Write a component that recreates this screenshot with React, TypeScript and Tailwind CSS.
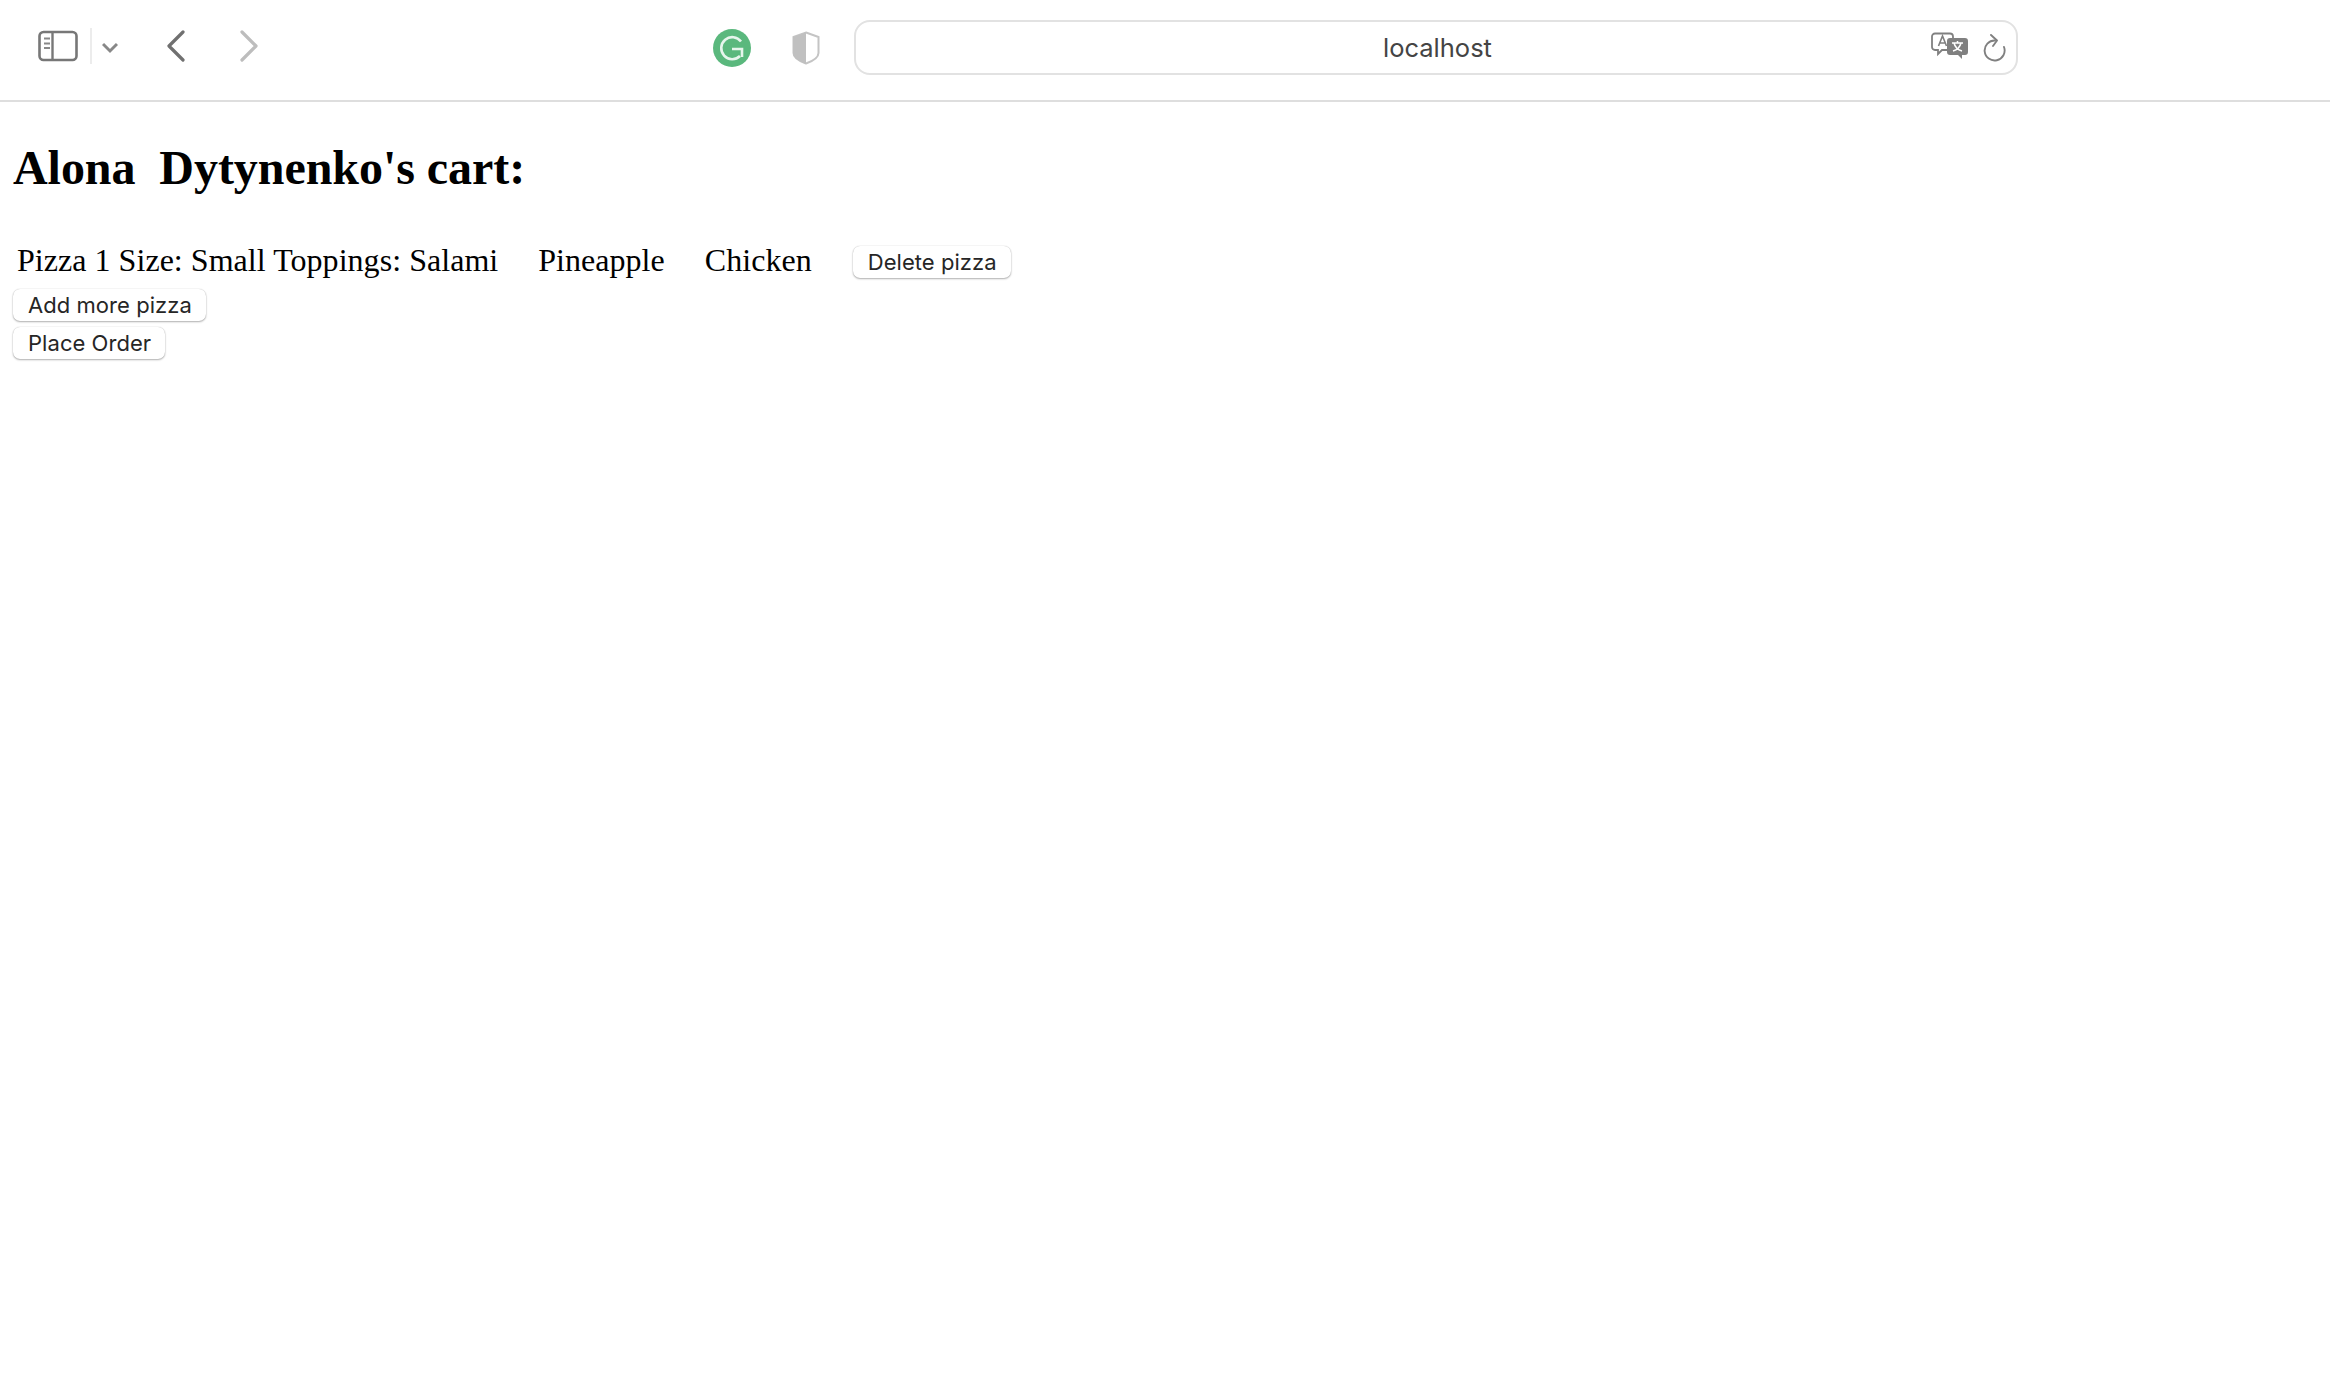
import React from 'react';

const Toolbar = () => (
  <div className="flex h-[102px] items-center border-b-2 border-[#dedede] bg-white pb-[5px] pl-[38px]">
    {/* sidebar toggle */}
    <svg width="40" height="32" viewBox="0 0 40 32" fill="none" className="mb-[3px]">
      <rect x="1.5" y="2" width="37" height="28" rx="4" stroke="#777" strokeWidth="2.6" />
      <path d="M14.5 2v28" stroke="#777" strokeWidth="2.4" />
      <path d="M6 8.5h6M6 13.5h6M6 18h6" stroke="#888" strokeWidth="2" />
    </svg>
    <div className="mb-[3px] ml-[12px] h-[36px] w-[2px] bg-[#ececec]" />
    <svg width="16" height="12" viewBox="0 0 16 12" fill="none" className="ml-[10px]">
      <path d="M1 2l7 7 7-7" stroke="#888" strokeWidth="3" />
    </svg>
    <svg width="20" height="32" viewBox="0 0 20 32" fill="none" className="mb-[3px] ml-[48px]">
      <path d="M17 2L3 16l14 14" stroke="#707070" strokeWidth="3.2" strokeLinecap="round" strokeLinejoin="round" />
    </svg>
    <svg width="20" height="32" viewBox="0 0 20 32" fill="none" className="mb-[3px] ml-[53px]">
      <path d="M3 2l14 14L3 30" stroke="#bdbdbd" strokeWidth="3.2" strokeLinecap="round" strokeLinejoin="round" />
    </svg>

    {/* grammarly */}
    <svg width="38" height="38" viewBox="0 0 38 38" fill="none" className="ml-[454px]">
      <circle cx="19" cy="19" r="19" fill="#5ab87d" />
      <path d="M28 12.5A11 11 0 1 0 27 27" stroke="#e6f5ec" strokeWidth="2.6" fill="none" />
      <path d="M20 20h9v8M19 20h10" stroke="#e6f5ec" strokeWidth="2.6" />
    </svg>
    {/* shield */}
    <svg width="28" height="34" viewBox="0 0 28 34" fill="none" className="ml-[41px]">
      <path d="M14 1.5L26.5 6v16c0 4-4 7.500-12.500 10.500C5.500 29.500 1.500 26 1.500 22V6z" fill="none" stroke="#c4c4c4" strokeWidth="2" />
      <path d="M14 1.500L1 6v16c0 4 4 7.500 13 11z" fill="#c0c0c0" />
    </svg>

    {/* address bar */}
    <div className="ml-[34px] flex h-[55px] w-[1164px] items-center rounded-[16px] border-2 border-[#e2e2e2] bg-white">
      <div className="flex-1 pl-[166px] pt-[2px] text-center font-['Inter','Liberation_Sans',sans-serif] text-[25.5px] text-[#444]">localhost</div>
      <svg width="38" height="28" viewBox="0 0 38 28" fill="none" className="mb-[3px] ml-[78px]">
        <path d="M4 1.500h15a3 3 0 0 1 3 3V15a3 3 0 0 1-3 3H11l-4 4v-4H4a3 3 0 0 1-3-3V4.500a3 3 0 0 1 3-3z" fill="#fff" stroke="#808080" strokeWidth="1.800" />
        <path d="M7.500 14L11.500 4l4 10M9 11h5" stroke="#808080" strokeWidth="1.600" />
        <path d="M19 6h15a3 3 0 0 1 3 3v11a3 3 0 0 1-3 3h-3v4l-4-4h-8a3 3 0 0 1-3-3V9a3 3 0 0 1 3-3z" fill="#808080" />
        <path d="M21 11h11M26.500 9v2M23 11c1 4 4 7 8 8M30 11c-1 4-4 7-8 8" stroke="#fff" strokeWidth="1.500" />
      </svg>
      <svg width="24" height="28" viewBox="0 0 24 28" fill="none" className="ml-[13px] mr-[10px]">
        <path d="M13 6.500A10 10 0 1 0 22 13" stroke="#808080" strokeWidth="1.900" strokeLinecap="round" />
        <path d="M9 1l6 5.500L11 12" stroke="#808080" strokeWidth="1.900" strokeLinecap="round" strokeLinejoin="round" />
      </svg>
    </div>
  </div>
);

const PageButton = ({ label }: { label: string }) => (
  <button
    type="button"
    className="h-[32px] rounded-[7px] bg-white pl-[15px] pr-[14px] font-['Inter','Liberation_Sans',sans-serif] text-[22px] leading-[32px] tracking-[0.05px] text-[#262626] shadow-[0_1px_2px_rgba(0,0,0,0.3),0_0_1px_rgba(0,0,0,0.25)]"
  >
    {label}
  </button>
);

const App: React.FC = () => {
  const toppings = ['Salami', 'Pineapple', 'Chicken'];

  return (
    <div className="h-[1375px] w-[2330px] overflow-hidden bg-white font-['Liberation_Serif',serif] text-black">
      <Toolbar />
      <div className="px-[13px]">
        <h1 className="mt-[38px] whitespace-pre text-[48px] font-bold leading-[55px] tracking-[-0.05px]">Alona  Dytynenko's cart:</h1>
        <div className="mt-[47px] flex h-[36px] items-center pl-[4px] text-[32px] leading-[36px] tracking-[0.04px]">
          <span>Pizza 1 Size: Small Toppings:&nbsp;</span>
          {toppings.map(t => (
            <span key={t} className="mr-[40px]">{t}</span>
          ))}
          <div className="mb-[2px] ml-[1px]">
            <PageButton label="Delete pizza" />
          </div>
        </div>
        <div className="mt-[11px]">
          <PageButton label="Add more pizza" />
        </div>
        <div className="mt-[6px]">
          <PageButton label="Place Order" />
        </div>
      </div>
    </div>
  );
};

export default App;
